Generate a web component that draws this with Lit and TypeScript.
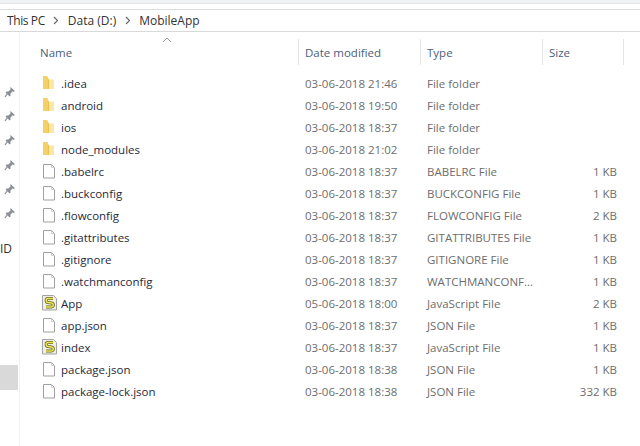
import { LitElement, html, css, svg } from 'lit';
import { customElement } from 'lit/decorators.js';

type Kind = 'folder' | 'file' | 'script';

interface Entry {
  name: string;
  date: string;
  type: string;
  size: string;
  kind: Kind;
}

const ENTRIES: Entry[] = [
  { name: '.idea', date: '03-06-2018 21:46', type: 'File folder', size: '', kind: 'folder' },
  { name: 'android', date: '03-06-2018 19:50', type: 'File folder', size: '', kind: 'folder' },
  { name: 'ios', date: '03-06-2018 18:37', type: 'File folder', size: '', kind: 'folder' },
  { name: 'node_modules', date: '03-06-2018 21:02', type: 'File folder', size: '', kind: 'folder' },
  { name: '.babelrc', date: '03-06-2018 18:37', type: 'BABELRC File', size: '1 KB', kind: 'file' },
  { name: '.buckconfig', date: '03-06-2018 18:37', type: 'BUCKCONFIG File', size: '1 KB', kind: 'file' },
  { name: '.flowconfig', date: '03-06-2018 18:37', type: 'FLOWCONFIG File', size: '2 KB', kind: 'file' },
  { name: '.gitattributes', date: '03-06-2018 18:37', type: 'GITATTRIBUTES File', size: '1 KB', kind: 'file' },
  { name: '.gitignore', date: '03-06-2018 18:37', type: 'GITIGNORE File', size: '1 KB', kind: 'file' },
  { name: '.watchmanconfig', date: '03-06-2018 18:37', type: 'WATCHMANCONF...', size: '1 KB', kind: 'file' },
  { name: 'App', date: '05-06-2018 18:00', type: 'JavaScript File', size: '2 KB', kind: 'script' },
  { name: 'app.json', date: '03-06-2018 18:37', type: 'JSON File', size: '1 KB', kind: 'file' },
  { name: 'index', date: '03-06-2018 18:37', type: 'JavaScript File', size: '1 KB', kind: 'script' },
  { name: 'package.json', date: '03-06-2018 18:38', type: 'JSON File', size: '1 KB', kind: 'file' },
  { name: 'package-lock.json', date: '03-06-2018 18:38', type: 'JSON File', size: '332 KB', kind: 'file' },
];

const folderIcon = svg`<svg width="16" height="16" viewBox="0 0 16 16">
  <path d="M0 1h4l1 1v12H0z" fill="#f5cf68"/>
  <path d="M4.5 2.5l1.5 2H11v9.5H4.5z" fill="#fce8a6"/>
  <path d="M4.5 2.5l1.5 2V14H4.5z" fill="#ecc04f"/>
</svg>`;

const fileIcon = svg`<svg width="16" height="16" viewBox="0 0 16 16">
  <path d="M.5 1.5h8l3 3v10.5H.5z" fill="#fff" stroke="#a0a0a0"/>
  <path d="M8.5 1.5v3h3" fill="none" stroke="#cfcfcf"/>
</svg>`;

const scriptIcon = svg`<svg width="16" height="16" viewBox="0 0 16 16" style="overflow:visible">
  <path d="M-.5 .5h11l3 3v11.5h-14z" fill="#efefe6" stroke="#a3a3a3"/>
  <path d="M10 3.6H5C2.6 3.6 2.6 7.2 5 7.4l3.6.5c2.4.4 2.2 4-.1 4H3" fill="none" stroke="#6a6a1e" stroke-width="3"/>
  <path d="M10 3.6H5C2.6 3.6 2.6 7.2 5 7.4l3.6.5c2.4.4 2.2 4-.1 4H3" fill="none" stroke="#ece65a" stroke-width="1.5"/>
</svg>`;

const pinIcon = svg`<svg width="12" height="12" viewBox="0 0 12 12">
  <path d="M6.6 1l4.4 4.2-1.2.6-1.4-.2L6.4 7.7l.2 1.9-1 .8-4-4 .9-1 1.8.2 2.2-2.1-.2-1.4z" fill="#8b9097"/>
  <path d="M3.4 7.6L1 11" stroke="#8b9097" stroke-width="1.2" fill="none"/>
</svg>`;

const ICONS = { folder: folderIcon, file: fileIcon, script: scriptIcon };

@customElement('app-root')
export class AppRoot extends LitElement {
  static styles = css`
    :host {
      display: block;
      width: 640px;
      height: 446px;
      overflow: hidden;
      background: #fff;
      font-family: 'Open Sans', 'Noto Sans', sans-serif;
      font-size: 11.5px;
      color: #1e1e1e;
    }
    .ribbon {
      height: 3px;
      background: #f0f1f4;
      border-bottom: 1px solid #e4e6ea;
    }
    .address {
      display: flex;
      align-items: center;
      height: 21px;
      margin-top: 5px;
      padding-left: 7px;
      border-top: 1px solid #dcdcdc;
      border-bottom: 1px solid #d9d9d9;
      font-size: 12px;
      color: #333;
    }
    .root-crumb {
      letter-spacing: -0.4px;
    }
    .chev {
      width: 23px;
      display: flex;
      justify-content: center;
    }
    .chev svg {
      display: block;
    }
    .body {
      display: flex;
      height: 414px;
    }
    .side {
      position: relative;
      width: 19px;
      flex: none;
      border-right: 1px solid #f2f2f2;
    }
    .pins {
      display: flex;
      flex-direction: column;
      gap: 12.2px;
      padding: 54px 0 0 4px;
    }
    .pins svg {
      display: block;
    }
    .drive {
      margin: 9px 0 0 -4px;
      font-size: 12px;
      color: #333;
    }
    .selected {
      position: absolute;
      left: 0;
      top: 333px;
      width: 18px;
      height: 25px;
      background: #d9d9d9;
    }
    .list {
      flex: 1;
      min-width: 0;
    }
    .head,
    .row {
      display: grid;
      grid-template-columns: 279px 122px 122px 81px;
    }
    .head {
      position: relative;
      height: 26px;
      margin-top: 7px;
      margin-bottom: 7px;
      color: #4c607a;
    }
    .head > div {
      display: flex;
      align-items: center;
      padding-left: 6px;
      border-right: 1px solid #e5e5e5;
    }
    .head > div:first-of-type {
      padding-left: 20px;
    }
    .sort {
      position: absolute;
      left: 141px;
      top: -2px;
    }
    .row {
      height: 22px;
      align-items: center;
      color: #6d6d6d;
    }
    .row > div {
      padding-left: 6px;
      white-space: nowrap;
    }
    .row .name {
      display: flex;
      align-items: center;
      gap: 2px;
      padding-left: 23px;
      color: #1f2a3a;
    }
    .row .name svg {
      display: block;
      flex: none;
    }
    .row .size {
      padding: 0 7px 0 0;
      text-align: right;
    }
  `;

  render() {
    return html`
      <div class="ribbon"></div>
      <div class="address">
        <span class="root-crumb">This PC</span>
        <span class="chev">${this.chevron()}</span>
        <span>Data (D:)</span>
        <span class="chev">${this.chevron()}</span>
        <span>MobileApp</span>
      </div>
      <div class="body">
        <div class="side">
          <div class="pins">
            ${[0, 1, 2, 3, 4, 5].map(() => pinIcon)}
            <div class="drive">ID</div>
          </div>
          <div class="selected"></div>
        </div>
        <div class="list">
          <div class="head">
            <svg class="sort" width="12" height="6" viewBox="0 0 12 6">
              <path d="M2 5l4-4 4 4" fill="none" stroke="#9a9a9a"/>
            </svg>
            <div>Name</div>
            <div>Date modified</div>
            <div>Type</div>
            <div>Size</div>
          </div>
          ${ENTRIES.map(
            (e) => html`
              <div class="row">
                <div class="name">${ICONS[e.kind]}<span>${e.name}</span></div>
                <div>${e.date}</div>
                <div>${e.type}</div>
                <div class="size">${e.size}</div>
              </div>
            `
          )}
        </div>
      </div>
    `;
  }

  private chevron() {
    return svg`<svg width="6" height="9" viewBox="0 0 6 9"><path d="M1 1l3.5 3.5L1 8" fill="none" stroke="#666" stroke-width="1.1"/></svg>`;
  }
}
